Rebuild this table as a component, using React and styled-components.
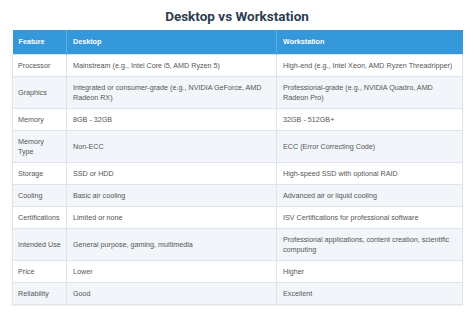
import React from "react";
import styled, { createGlobalStyle } from "styled-components";

const GlobalStyle = createGlobalStyle`
  body {
    margin: 0;
    background: #ffffff;
    font-family: "Liberation Sans", Arial, sans-serif;
  }
`;

const Page = styled.div`
  width: 474px;
  height: 318px;
  padding: 0 12px;
  box-sizing: border-box;
`;

const Title = styled.h1`
  margin: 0;
  height: 30px;
  line-height: 32px;
  text-align: center;
  font-family: Roboto, "Liberation Sans", sans-serif;
  font-size: 13.5px;
  font-weight: 700;
  color: #2c3e50;
`;

const Table = styled.table`
  width: 450px;
  border-collapse: collapse;
  table-layout: fixed;
  font-size: 7.2px;
  line-height: 10px;
  color: #555;
  box-shadow: 0 1px 2px rgba(0, 0, 0, 0.06);
`;

const Head = styled.th`
  background: #3498db;
  color: #fff;
  font-weight: 700;
  text-align: left;
  height: 24px;
  padding: 0 6px;
  border-right: 1px solid #5aaee6;
  &:first-child {
    padding: 0 4px 0 6px;
  }
  &:last-child {
    border-right: none;
  }
`;

const Row = styled.tr`
  background: ${(p) => (p.$striped ? "#f2f6fa" : "#ffffff")};
`;

const Cell = styled.td`
  padding: 5.5px 6px;
  border: 1px solid #dfe4ea;
  vertical-align: middle;
  &:first-child {
    padding: 5.5px 3px 5.5px 5px;
  }
`;

const Label = styled.span`
  display: block;
  max-width: 42.8px;
`;

const rows = [
  ["Processor", "Mainstream (e.g., Intel Core i5, AMD Ryzen 5)", "High-end (e.g., Intel Xeon, AMD Ryzen Threadripper)"],
  ["Graphics", "Integrated or consumer-grade (e.g., NVIDIA GeForce, AMD Radeon RX)", "Professional-grade (e.g., NVIDIA Quadro, AMD Radeon Pro)"],
  ["Memory", "8GB - 32GB", "32GB - 512GB+"],
  ["Memory Type", "Non-ECC", "ECC (Error Correcting Code)"],
  ["Storage", "SSD or HDD", "High-speed SSD with optional RAID"],
  ["Cooling", "Basic air cooling", "Advanced air or liquid cooling"],
  ["Certifications", "Limited or none", "ISV Certifications for professional software"],
  ["Intended Use", "General purpose, gaming, multimedia", "Professional applications, content creation, scientific computing"],
  ["Price", "Lower", "Higher"],
  ["Reliability", "Good", "Excellent"],
];

const App = () => {
  return (
    <Page>
      <GlobalStyle />
      <Title>Desktop vs Workstation</Title>
      <Table>
        <colgroup>
          <col style={{ width: 54 }} />
          <col style={{ width: 210 }} />
          <col style={{ width: 186 }} />
        </colgroup>
        <thead>
          <tr>
            <Head>Feature</Head>
            <Head>Desktop</Head>
            <Head>Workstation</Head>
          </tr>
        </thead>
        <tbody>
          {rows.map(([feature, desktop, workstation], i) => (
            <Row key={feature} $striped={i % 2 === 1}>
              <Cell>
                <Label>{feature}</Label>
              </Cell>
              <Cell>{desktop}</Cell>
              <Cell>{workstation}</Cell>
            </Row>
          ))}
        </tbody>
      </Table>
    </Page>
  );
};

export default App;
